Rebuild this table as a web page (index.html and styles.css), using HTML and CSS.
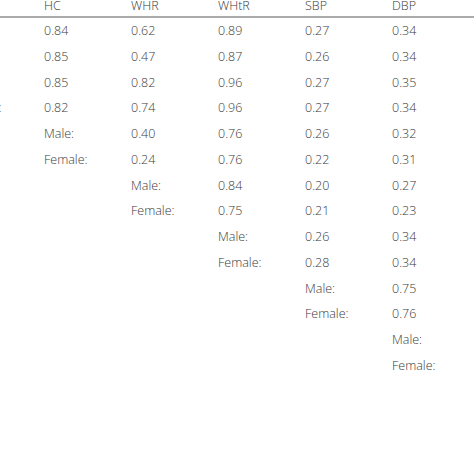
FILE: index.html
```html
<!DOCTYPE html>
<html>
<head>
<meta charset="utf-8">
<link rel="stylesheet" href="styles.css">
</head>
<body>
<div class="table">
  <div class="row head">
    <div class="cell lead"></div><div class="cell">HC</div><div class="cell">WHR</div><div class="cell">WHtR</div><div class="cell">SBP</div><div class="cell">DBP</div>
  </div>
  <div class="row"><div class="cell lead">0.80</div><div class="cell">0.84</div><div class="cell">0.62</div><div class="cell">0.89</div><div class="cell">0.27</div><div class="cell">0.34</div></div>
  <div class="row"><div class="cell lead">0.80</div><div class="cell">0.85</div><div class="cell">0.47</div><div class="cell">0.87</div><div class="cell">0.26</div><div class="cell">0.34</div></div>
  <div class="row"><div class="cell lead">Male:</div><div class="cell">0.85</div><div class="cell">0.82</div><div class="cell">0.96</div><div class="cell">0.27</div><div class="cell">0.35</div></div>
  <div class="row"><div class="cell lead">Female:</div><div class="cell">0.82</div><div class="cell">0.74</div><div class="cell">0.96</div><div class="cell">0.27</div><div class="cell">0.34</div></div>
  <div class="row"><div class="cell lead"></div><div class="cell">Male:</div><div class="cell">0.40</div><div class="cell">0.76</div><div class="cell">0.26</div><div class="cell">0.32</div></div>
  <div class="row"><div class="cell lead"></div><div class="cell">Female:</div><div class="cell">0.24</div><div class="cell">0.76</div><div class="cell">0.22</div><div class="cell">0.31</div></div>
  <div class="row"><div class="cell lead"></div><div class="cell"></div><div class="cell">Male:</div><div class="cell">0.84</div><div class="cell">0.20</div><div class="cell">0.27</div></div>
  <div class="row"><div class="cell lead"></div><div class="cell"></div><div class="cell">Female:</div><div class="cell">0.75</div><div class="cell">0.21</div><div class="cell">0.23</div></div>
  <div class="row"><div class="cell lead"></div><div class="cell"></div><div class="cell"></div><div class="cell">Male:</div><div class="cell">0.26</div><div class="cell">0.34</div></div>
  <div class="row"><div class="cell lead"></div><div class="cell"></div><div class="cell"></div><div class="cell">Female:</div><div class="cell">0.28</div><div class="cell">0.34</div></div>
  <div class="row"><div class="cell lead"></div><div class="cell"></div><div class="cell"></div><div class="cell"></div><div class="cell">Male:</div><div class="cell">0.75</div></div>
  <div class="row"><div class="cell lead"></div><div class="cell"></div><div class="cell"></div><div class="cell"></div><div class="cell">Female:</div><div class="cell">0.76</div></div>
  <div class="row"><div class="cell lead"></div><div class="cell"></div><div class="cell"></div><div class="cell"></div><div class="cell"></div><div class="cell">Male:</div></div>
  <div class="row"><div class="cell lead"></div><div class="cell"></div><div class="cell"></div><div class="cell"></div><div class="cell"></div><div class="cell">Female:</div></div>
</div>
</body>
</html>
```

FILE: styles.css
```css
html, body {
  margin: 0;
  padding: 0;
  background: #ffffff;
  overflow: hidden;
  width: 474px;
  height: 474px;
}

.table {
  margin-left: -43px;
  width: 517px;
  font-family: "Open Sans", "Liberation Sans", sans-serif;
  font-size: 12.5px;
  font-weight: 350;
  color: #3a3a3a;
}

.row {
  display: grid;
  grid-template-columns: repeat(5, 87px) 82px;
  height: 25.75px;
  line-height: 25.75px;
}

.row.head {
  height: 16px;
  line-height: 11px;
  border-bottom: 2px solid #ababab;
}

.cell {
  white-space: nowrap;
}

.cell.lead {
  padding-left: 1px;
}
```
